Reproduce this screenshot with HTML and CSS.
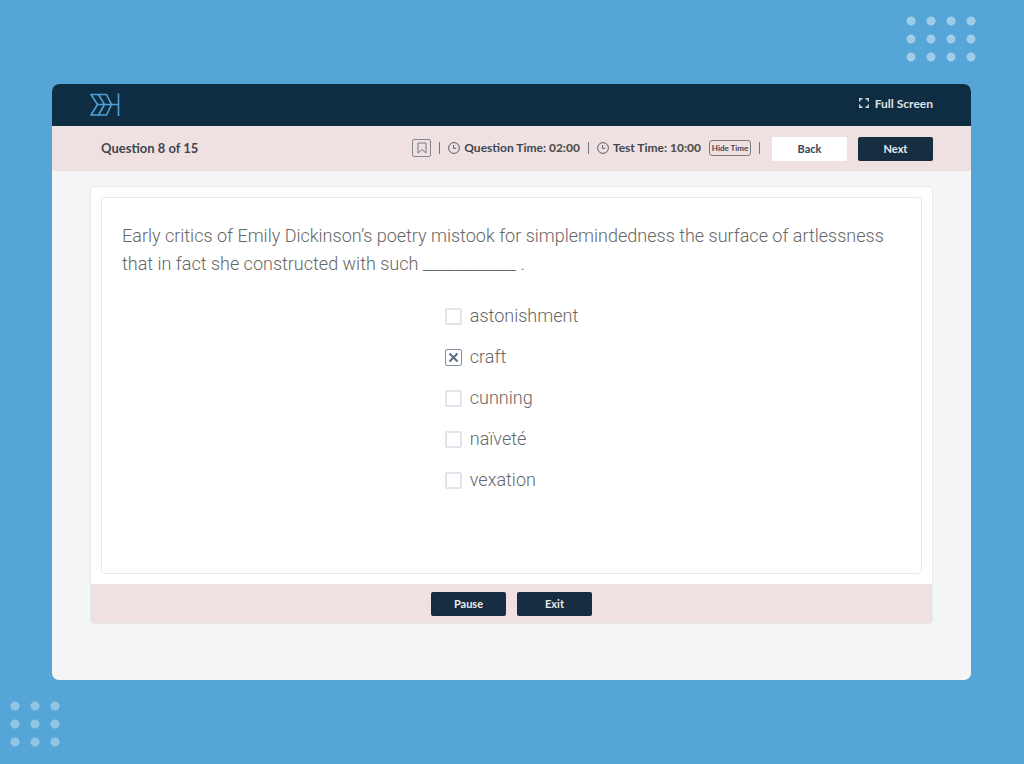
FILE: index.html
```html
<!DOCTYPE html>
<html lang="en">
<head>
    <meta charset="UTF-8">
    <meta name="viewport" content="width=device-width, initial-scale=1.0">
    <title>Practice Test</title>
    <link rel="stylesheet" href="styles.css">
</head>
<body>
    <div class="dots dots-top"></div>
    <div class="dots dots-bottom"></div>

    <main class="window">
        <header class="topbar">
            <svg class="logo" width="30" height="24" viewBox="0 0 30 24" role="img" aria-label="Home">
                <path d="M1 1.5H16.5L21.5 11.5L16.5 22H1L7.5 11.5ZM8.5 1.5L14.5 11.5L8.5 22M7.5 11.5H28.5M28.5 0.5V23"/>
            </svg>
            <button class="fullscreen" type="button">
                <svg width="10" height="10" viewBox="0 0 10 10" aria-hidden="true">
                    <path d="M0.8 3.5V0.8H3.5M6.5 0.8H9.2V3.5M9.2 6.5V9.2H6.5M3.5 9.2H0.8V6.5"/>
                </svg>
                Full Screen
            </button>
        </header>

        <div class="statusbar">
            <h1 class="progress">Question 8 of 15</h1>
            <div class="tools">
                <button class="bookmark" type="button" aria-label="Bookmark">
                    <svg width="10" height="12" viewBox="0 0 10 12" aria-hidden="true">
                        <path d="M1 1H9V11L5 7.5L1 11Z"/>
                    </svg>
                </button>
                <span class="divider"></span>
                <span class="timer">
                    <svg width="12" height="12" viewBox="0 0 12 12" aria-hidden="true">
                        <circle cx="6" cy="6" r="5.4"/>
                        <path d="M5.6 3V6.4H8.2"/>
                    </svg>
                    <span>Question Time: <b>02:00</b></span>
                </span>
                <span class="divider"></span>
                <span class="timer">
                    <svg width="12" height="12" viewBox="0 0 12 12" aria-hidden="true">
                        <circle cx="6" cy="6" r="5.4"/>
                        <path d="M5.6 3V6.4H8.2"/>
                    </svg>
                    <span>Test Time: <b>10:00</b></span>
                </span>
                <button class="hide-time" type="button">Hide Time</button>
                <span class="divider"></span>
            </div>
            <div class="nav">
                <button class="btn btn-light" type="button">Back</button>
                <button class="btn" type="button">Next</button>
            </div>
        </div>

        <form class="panel">
            <div class="question">
                <p class="prompt" id="prompt">Early critics of Emily Dickinson’s poetry mistook for simplemindedness the surface of artlessness that in fact she constructed with such ____________ .</p>
                <div class="options" role="group" aria-labelledby="prompt">
                    <label class="option"><input type="checkbox" name="answer">astonishment</label>
                    <label class="option"><input type="checkbox" name="answer" checked>craft</label>
                    <label class="option"><input type="checkbox" name="answer">cunning</label>
                    <label class="option"><input type="checkbox" name="answer">naïveté</label>
                    <label class="option"><input type="checkbox" name="answer">vexation</label>
                </div>
            </div>
            <div class="panel-footer">
                <button class="btn" type="button">Pause</button>
                <button class="btn" type="button">Exit</button>
            </div>
        </form>
    </main>
</body>
</html>
```
FILE: styles.css
```css
* {
    box-sizing: border-box;
}
body {
    position: relative;
    display: flex;
    min-height: 100vh;
    margin: 0;
    padding: 84px 53px 84px 52px;
    background: #55a5d6;
    color: #3f4650;
    font-family: Lato, "Liberation Sans", sans-serif;
}
button {
    padding: 0;
    border: 0;
    background: none;
    color: inherit;
    font-family: inherit;
    cursor: pointer;
}
svg {
    display: block;
    fill: none;
    stroke: currentColor;
}

/* dot patterns in the page corners */
.dots {
    position: absolute;
    height: 54px;
    background-image: radial-gradient(circle, #9fcde8 4px, transparent 5px);
    background-size: 20px 18px;
}
.dots-top {
    top: 12px;
    right: 43px;
    width: 80px;
}
.dots-bottom {
    bottom: 13px;
    left: 5px;
    width: 60px;
    opacity: 0.8;
}

.window {
    flex: 1;
    overflow: hidden;
    border-radius: 7px;
    background: #f4f5f7;
}
.topbar {
    display: flex;
    align-items: center;
    justify-content: space-between;
    height: 42px;
    padding: 0 38px;
    background: #0f2d42;
}
.logo {
    color: #4fa0d3;
    stroke-width: 1.6;
}
.fullscreen {
    display: flex;
    align-items: center;
    gap: 6px;
    padding-bottom: 4px;
    color: #dde2e6;
    font-size: 12px;
    font-weight: 700;
}
.fullscreen svg {
    stroke-width: 1.4;
}

.statusbar {
    display: flex;
    align-items: center;
    height: 45px;
    padding: 0 38px 0 49px;
    background: #efe1e2;
}
.progress {
    flex: 1;
    margin: 0;
    padding-bottom: 2px;
    font-size: 13px;
    font-weight: 700;
}
.tools {
    display: flex;
    align-items: center;
    gap: 8px;
    padding-bottom: 2px;
}
.bookmark {
    display: grid;
    place-items: center;
    width: 19px;
    height: 18px;
    border: 1px solid #85858c;
    border-radius: 2px;
    color: #77777f;
}
.divider {
    width: 1px;
    height: 12px;
    background: #77777f;
}
.timer {
    display: flex;
    align-items: center;
    gap: 4px;
    font-size: 12px;
    font-weight: 700;
}
.timer svg {
    color: #5a5f68;
}
.timer b {
    color: #55554f;
}
.hide-time {
    width: 42px;
    height: 16px;
    border: 1px solid #77777f;
    border-radius: 3px;
    font-size: 8px;
    font-weight: 700;
}
.nav {
    display: flex;
    gap: 11px;
    margin-left: 12px;
}
.btn {
    width: 75px;
    height: 24px;
    border-radius: 2px;
    background: #162d42;
    color: #e8ecef;
    font-size: 11px;
    font-weight: 700;
}
.btn-light {
    background: #fff;
    color: #33475a;
}

.panel {
    margin: 15px 38px 56px;
    overflow: hidden;
    border: 1px solid #e6e9ed;
    border-radius: 4px;
    background: #fff;
}
.question {
    min-height: 377px;
    margin: 10px;
    padding: 24px 20px;
    border: 1px solid #e6e9ed;
    border-radius: 4px;
    color: #666;
    font-family: Roboto, "Liberation Sans", sans-serif;
    font-size: 18px;
    font-weight: 300;
}
.prompt {
    margin: 0;
    line-height: 28px;
}
.options {
    display: grid;
    gap: 17px;
    width: fit-content;
    margin: 26px auto 0;
}
.option {
    display: flex;
    align-items: center;
    gap: 8px;
    line-height: 24px;
}
.option input {
    appearance: none;
    width: 17px;
    height: 17px;
    margin: 0;
    border: 2px solid #dfe5eb;
    border-radius: 2px;
}
.option input:checked {
    border: 1px solid #8490a5;
    background: url("data:image/svg+xml,%3Csvg xmlns='http://www.w3.org/2000/svg' viewBox='0 0 15 15'%3E%3Cpath d='M3.5 3.5L11.5 11.5M11.5 3.5L3.5 11.5' stroke='%235d6b85' stroke-width='2'/%3E%3C/svg%3E") center no-repeat;
}
.panel-footer {
    display: flex;
    align-items: center;
    justify-content: center;
    gap: 11px;
    height: 39px;
    background: #efe1e2;
}
```
